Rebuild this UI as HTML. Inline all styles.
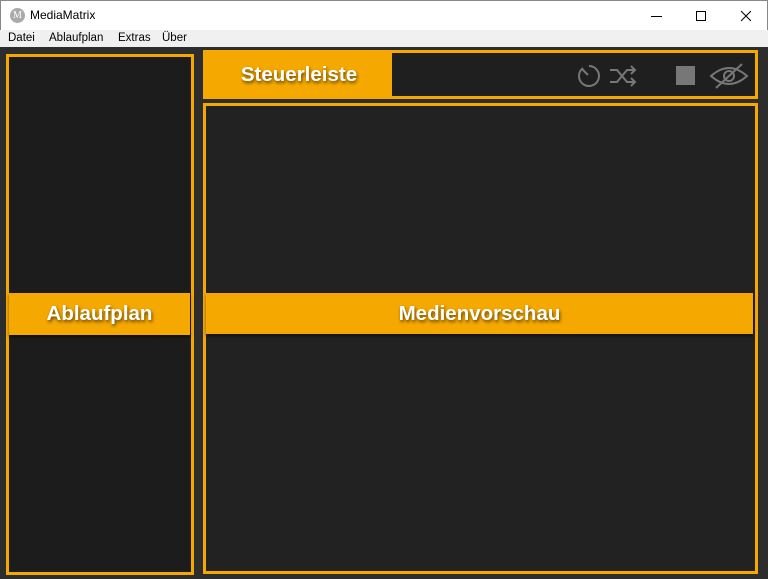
<!DOCTYPE html>
<html><head><meta charset="utf-8"><style>
*{margin:0;padding:0;box-sizing:border-box}
body{width:768px;height:579px;overflow:hidden;background:#2d2d2d;font-family:"Liberation Sans",sans-serif;position:relative}
.title{position:absolute;left:0;top:0;width:768px;height:30px;background:#fff;border:1px solid #888;border-bottom:none}
.title .t{position:absolute;left:29px;top:7px;font-size:12px;color:#000}
.logo{position:absolute;left:9px;top:7px;width:15px;height:15px;border-radius:50%;background:#aaa;color:#fff;font-size:10px;text-align:center;line-height:15px;font-family:"Liberation Serif",serif}
.menu{position:absolute;left:0;top:30px;width:768px;height:17px;background:#f0f0f0;font-size:11.5px;color:#000}
.menu span{position:absolute;top:2px}
.box{position:absolute;border:3px solid #f5a800}
.band{position:absolute;background:#f5a800;color:#fff;font-weight:bold;font-size:20.5px;text-align:center;text-shadow:1px 2px 3px rgba(0,0,0,.6);box-shadow:0 2px 3px rgba(0,0,0,.5)}
</style></head><body>
<div class="title"><div class="logo">M</div><div class="t">MediaMatrix</div>
<svg style="position:absolute;left:650px;top:9px" width="100" height="12" stroke="#000" stroke-width="1" fill="none"><path d="M0 6.5h11"/><path d="M45.5 1.5h9v9h-9z"/><path d="M90 1l10 10M100 1L90 11"/></svg>
</div>
<div class="menu"><span style="left:8px">Datei</span><span style="left:49px">Ablaufplan</span><span style="left:118px">Extras</span><span style="left:162px">Über</span></div>
<div class="box" style="left:6px;top:54px;width:188px;height:521px;background:#1c1c1c"></div>
<div class="band" style="left:9px;top:293px;width:181px;height:42px;line-height:42px">Ablaufplan</div>
<div class="box" style="left:203px;top:50px;width:555px;height:49px;background:#1f1f1f"></div>
<div class="band" style="left:206px;top:53px;width:186px;height:43px;line-height:43px;box-shadow:none">Steuerleiste</div>
<svg style="position:absolute;left:576px;top:62px" width="175" height="28" fill="none" stroke="#777" stroke-width="2">
<path d="M7 6a10 10 0 1 0 6-2"/><path d="M6 7l6 6"/>
<path d="M34 8h7l10 12h8M34 20h7l10-12h8M55 4l4 4-4 4M55 16l4 4-4 4"/>
<rect x="100" y="4" width="19" height="19" fill="#777" stroke="none"/>
<path d="M135 14q18-16 36 0q-18 16-36 0z"/><circle cx="153" cy="14" r="5"/><path d="M140 26l26-24"/>
</svg>
<div class="box" style="left:203px;top:103px;width:555px;height:471px;background:#222"></div>
<div class="band" style="left:206px;top:293px;width:547px;height:41px;line-height:41px">Medienvorschau</div>
</body></html>
